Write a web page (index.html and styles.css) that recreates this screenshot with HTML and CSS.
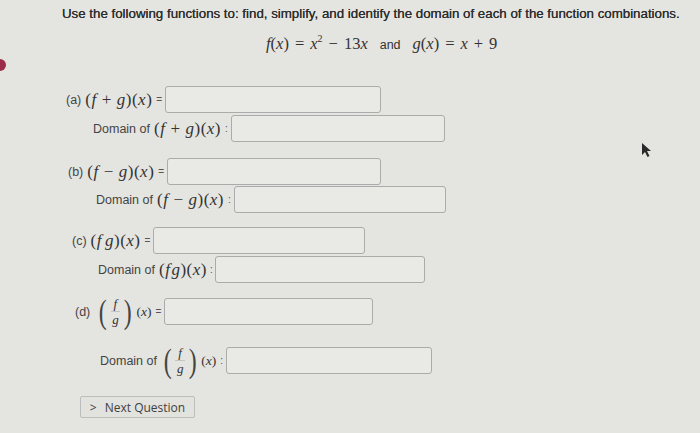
FILE: index.html
```html
<!DOCTYPE html>
<html>
<head>
<meta charset="utf-8">
<link rel="stylesheet" href="styles.css">
</head>
<body>
<div class="page">
  <p class="intro">Use the following functions to: find, simplify, and identify the domain of each of the function combinations.</p>
  <p class="formula"><span class="m">f</span>(<span class="m">x</span>)<span class="op">=</span><span class="m">x</span><sup>2</sup><span class="op">−</span>13<span class="m">x</span><span class="and">and</span><span class="m">g</span>(<span class="m">x</span>)<span class="op">=</span><span class="m">x</span><span class="op">+</span>9</p>

  <div class="row ra">
    <span class="lbl">(a)</span>
    <span class="math">(<span class="m">f</span><span class="op">+</span><span class="m">g</span>)(<span class="m">x</span>)</span>
    <span class="eq">=</span>
    <div class="box w216"></div>
  </div>
  <div class="row rad">
    <span class="lbl">Domain of</span>
    <span class="math">(<span class="m">f</span><span class="op">+</span><span class="m">g</span>)(<span class="m">x</span>)</span>
    <span class="eq">:</span>
    <div class="box w214"></div>
  </div>

  <div class="row rb">
    <span class="lbl">(b)</span>
    <span class="math">(<span class="m">f</span><span class="op">−</span><span class="m">g</span>)(<span class="m">x</span>)</span>
    <span class="eq">=</span>
    <div class="box w214"></div>
  </div>
  <div class="row rbd">
    <span class="lbl">Domain of</span>
    <span class="math">(<span class="m">f</span><span class="op">−</span><span class="m">g</span>)(<span class="m">x</span>)</span>
    <span class="eq">:</span>
    <div class="box w212"></div>
  </div>

  <div class="row rc">
    <span class="lbl">(c)</span>
    <span class="math">(<span class="m">f</span><span class="m g2">g</span>)(<span class="m">x</span>)</span>
    <span class="eq">=</span>
    <div class="box w212"></div>
  </div>
  <div class="row rcd">
    <span class="lbl">Domain of</span>
    <span class="math">(<span class="m">f</span><span class="m g2">g</span>)(<span class="m">x</span>)</span>
    <span class="eq">:</span>
    <div class="box w210"></div>
  </div>

  <div class="row rd">
    <span class="lbl lbl-d">(d)</span>
    <span class="frac-wrap">
      <span class="paren">(</span>
      <span class="frac"><span class="m num">f</span><span class="m den">g</span></span>
      <span class="paren">)</span>
    </span>
    <span class="math small">(<span class="m">x</span>)</span>
    <span class="eq">=</span>
    <div class="box w209"></div>
  </div>
  <div class="row rdd">
    <span class="lbl lbl-dd">Domain of</span>
    <span class="frac-wrap">
      <span class="paren">(</span>
      <span class="frac"><span class="m num">f</span><span class="m den">g</span></span>
      <span class="paren">)</span>
    </span>
    <span class="math small">(<span class="m">x</span>)</span>
    <span class="eq">:</span>
    <div class="box w206"></div>
  </div>

  <div class="btn-row">
    <button class="next"><span class="chev">&gt;</span>Next Question</button>
  </div>
</div>
<span class="dot"></span>
<svg class="cursor" width="12" height="16" viewBox="0 0 12 16"><path d="M1 1 L1 13 L4 10 L6.5 15 L8.5 14 L6 9 L10 9 Z" fill="#2a2a2a"/></svg>
</body>
</html>
```

FILE: styles.css
```css
html, body {
  margin: 0;
  padding: 0;
}
body {
  background: #e4e4e0;
  width: 700px;
  height: 433px;
  overflow: hidden;
  position: relative;
  font-family: "Liberation Sans", Arial, sans-serif;
  color: #3a3a3a;
}
.page {
  padding: 6px 0 0 0;
}
.intro {
  margin: 0 0 0 62px;
  font-size: 13.3px;
  line-height: 16px;
  white-space: nowrap;
  color: #2e2e2e;
  text-shadow: 0 0 0.3px #2e2e2e;
}
.formula {
  margin: 12px 0 0 266px;
  font-family: "Liberation Serif", "Times New Roman", serif;
  font-size: 16.5px;
  line-height: 20px;
  color: #333;
  white-space: nowrap;
}
.formula sup {
  font-size: 10px;
  vertical-align: 7px;
  line-height: 0;
}
.formula .op {
  margin: 0 6px;
}
.formula .and {
  font-family: "Liberation Sans", Arial, sans-serif;
  font-size: 12.5px;
  margin: 0 12px;
}
.m {
  font-style: italic;
}
.g2 {
  margin-left: 3px;
}
.rcd .g2 {
  margin-left: 1px;
}
.row {
  display: flex;
  align-items: center;
  height: 27px;
}
.lbl {
  font-size: 12.5px;
  color: #444;
  margin-right: 4px;
}
.math {
  font-family: "Liberation Serif", "Times New Roman", serif;
  font-size: 17px;
  color: #333;
  white-space: nowrap;
  letter-spacing: 0.5px;
}
.math .op {
  margin: 0 5px;
}
.math.small {
  font-size: 13.5px;
  margin-left: 3px;
  letter-spacing: 0;
}
.eq {
  font-size: 10px;
  margin: 0 3px 0 4px;
  color: #555;
}
.rcd .eq {
  margin: 0 2px 0 3px;
}
.box {
  height: 25px;
  border: 1px solid #ababab;
  border-radius: 3px;
  background: #e9e9e6;
  box-sizing: content-box;
}
.w216 { width: 214px; }
.w214 { width: 212px; }
.w212 { width: 210px; }
.w210 { width: 208px; }
.w209 { width: 207px; }
.w206 { width: 204px; }

.ra  { margin: 31px 0 0 66px; }
.rad { margin: 2px 0 0 93px; }
.rb  { margin: 16px 0 0 68px; }
.rbd { margin: 1px 0 0 96px; }
.rc  { margin: 14px 0 0 72px; }
.rcd { margin: 2px 0 0 98px; }
.rd  { margin: 15px 0 0 75px; }
.rdd { margin: 22px 0 0 100px; }

.lbl-d { margin-right: 7px; }
.lbl-dd { margin-right: 5px; }

.frac-wrap {
  display: inline-flex;
  align-items: center;
  font-family: "Liberation Serif", "Times New Roman", serif;
  color: #333;
}
.paren {
  font-size: 34px;
  line-height: 34px;
  transform: scaleX(0.7);
  color: #444;
}
.frac {
  display: inline-flex;
  flex-direction: column;
  align-items: center;
  font-size: 13px;
  line-height: 13px;
  padding: 0 2px;
}
.num {
  border-bottom: 1px solid #c4c4c4;
  padding: 0 3px 1px;
}
.den {
  padding-top: 1px;
}
.btn-row {
  margin: 22px 0 0 80px;
}
.next {
  width: 115px;
  height: 22px;
  border: 1px solid #bdbdbd;
  border-radius: 2px;
  background: #e2e2de;
  font-family: "Open Sans", "Liberation Sans", sans-serif;
  font-size: 12px;
  color: #3f3f3f;
  padding: 0;
  text-align: center;
}
.chev {
  margin-right: 8px;
}
.dot {
  position: absolute;
  left: -6px;
  top: 59px;
  width: 12px;
  height: 12px;
  border-radius: 50%;
  background: #9b2d4b;
}
.cursor {
  position: absolute;
  left: 641px;
  top: 142px;
}
```
